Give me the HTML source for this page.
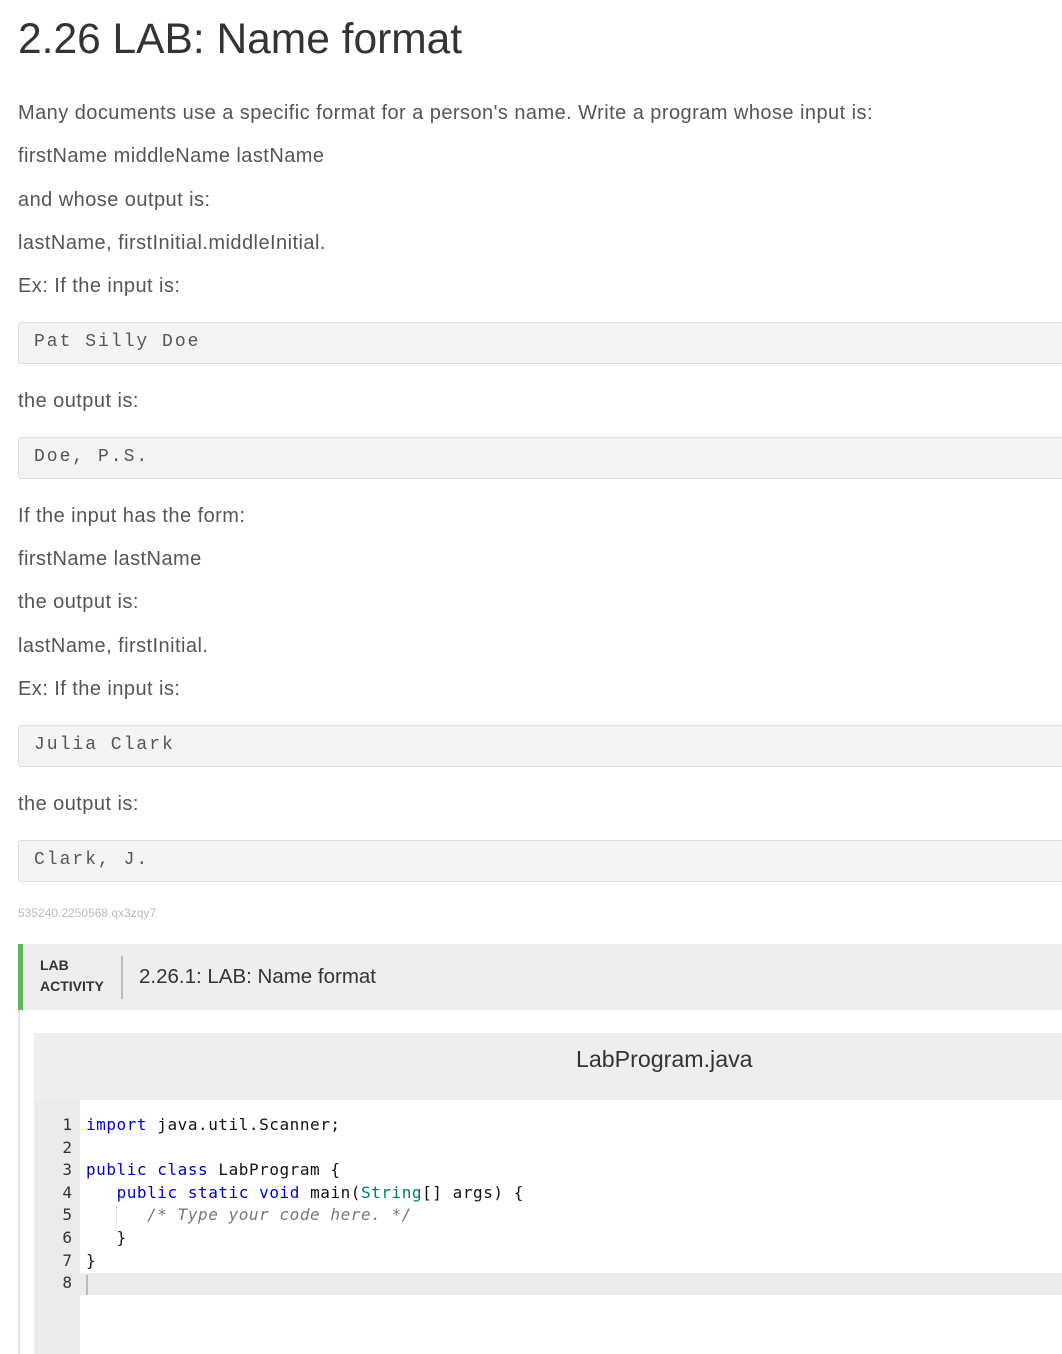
<!DOCTYPE html>
<html><head><style>
body{margin:0;width:1062px;height:1354px;overflow:hidden;background:#fff;font-family:"Liberation Sans",sans-serif;color:#555;position:relative}
.a{position:absolute;white-space:nowrap}
p.a{margin:0;font-size:20px;line-height:24px;letter-spacing:0.45px}
.box{position:absolute;left:18px;width:1100px;height:42px;background:#f4f4f4;border:1px solid #ddd;border-radius:3px;box-sizing:border-box}
.box span{position:absolute;left:15px;top:9px;font-family:"Liberation Mono",monospace;font-size:18px;color:#555;letter-spacing:2px}
.code{font-family:"DejaVu Sans Mono","Liberation Mono",monospace;font-size:16px;line-height:22.6px;color:#111;letter-spacing:0.55px}
.k{color:#00c}.t{color:#077}.c{color:#777;font-style:italic}
</style></head><body>
<div class="a" style="left:18px;top:13px;font-size:42.5px;color:#333;line-height:54px">2.26 LAB: Name format</div>
<p class="a" style="left:18px;top:101px">Many documents use a specific format for a person's name. Write a program whose input is:</p>
<p class="a" style="left:18px;top:144px">firstName middleName lastName</p>
<p class="a" style="left:18px;top:188px">and whose output is:</p>
<p class="a" style="left:18px;top:231px">lastName, firstInitial.middleInitial.</p>
<p class="a" style="left:18px;top:274px">Ex: If the input is:</p>
<div class="box" style="top:322px"><span>Pat Silly Doe</span></div>
<p class="a" style="left:18px;top:389px">the output is:</p>
<div class="box" style="top:437px"><span>Doe, P.S.</span></div>
<p class="a" style="left:18px;top:504px">If the input has the form:</p>
<p class="a" style="left:18px;top:547px">firstName lastName</p>
<p class="a" style="left:18px;top:590px">the output is:</p>
<p class="a" style="left:18px;top:634px">lastName, firstInitial.</p>
<p class="a" style="left:18px;top:677px">Ex: If the input is:</p>
<div class="box" style="top:725px"><span>Julia Clark</span></div>
<p class="a" style="left:18px;top:792px">the output is:</p>
<div class="box" style="top:840px"><span>Clark, J.</span></div>
<div class="a" style="left:18px;top:906px;font-size:12px;color:#bbb">535240.2250568.qx3zqy7</div>
<div class="a" style="left:18px;top:944px;width:1100px;height:410px;border-left:2px solid #e4e4e4"></div>
<div class="a" style="left:18px;top:944px;width:1100px;height:66px;background:#eee;border-left:5px solid #5cb85c;box-sizing:border-box"></div>
<div class="a" style="left:40px;top:955px;font-size:14px;font-weight:bold;color:#333;line-height:21px">LAB<br>ACTIVITY</div>
<div class="a" style="left:121px;top:956px;width:2px;height:43px;background:#bbb"></div>
<div class="a" style="left:139px;top:965px;font-size:20.5px;color:#333">2.26.1: LAB: Name format</div>
<div class="a" style="left:34px;top:1033px;width:1100px;height:67px;background:#eee"></div>
<div class="a" style="left:576px;top:1046px;font-size:23.2px;color:#333">LabProgram.java</div>
<div class="a" style="left:34px;top:1100px;width:46px;height:254px;background:#ebebeb"></div>
<div class="a" style="left:34px;top:1273px;width:1100px;height:22px;background:#ebebeb"></div>
<div class="a" style="left:86px;top:1275px;width:2px;height:20px;background:#bbb"></div>
<div class="a" style="left:116px;top:1206px;width:1px;height:22px;border-left:1px dotted #ccc"></div>
<div class="a code" style="left:34px;top:1114px;width:38px;text-align:right;color:#333;letter-spacing:0">1<br>2<br>3<br>4<br>5<br>6<br>7<br>8</div>
<div class="a code" style="left:86px;top:1114px;white-space:pre"><span class="k">import</span> java.util.Scanner;

<span class="k">public</span> <span class="k">class</span> LabProgram {
   <span class="k">public</span> <span class="k">static</span> <span class="k">void</span> main(<span class="t">String</span>[] args) {
      <span class="c">/* Type your code here. */</span>
   }
}</div>
</body></html>
